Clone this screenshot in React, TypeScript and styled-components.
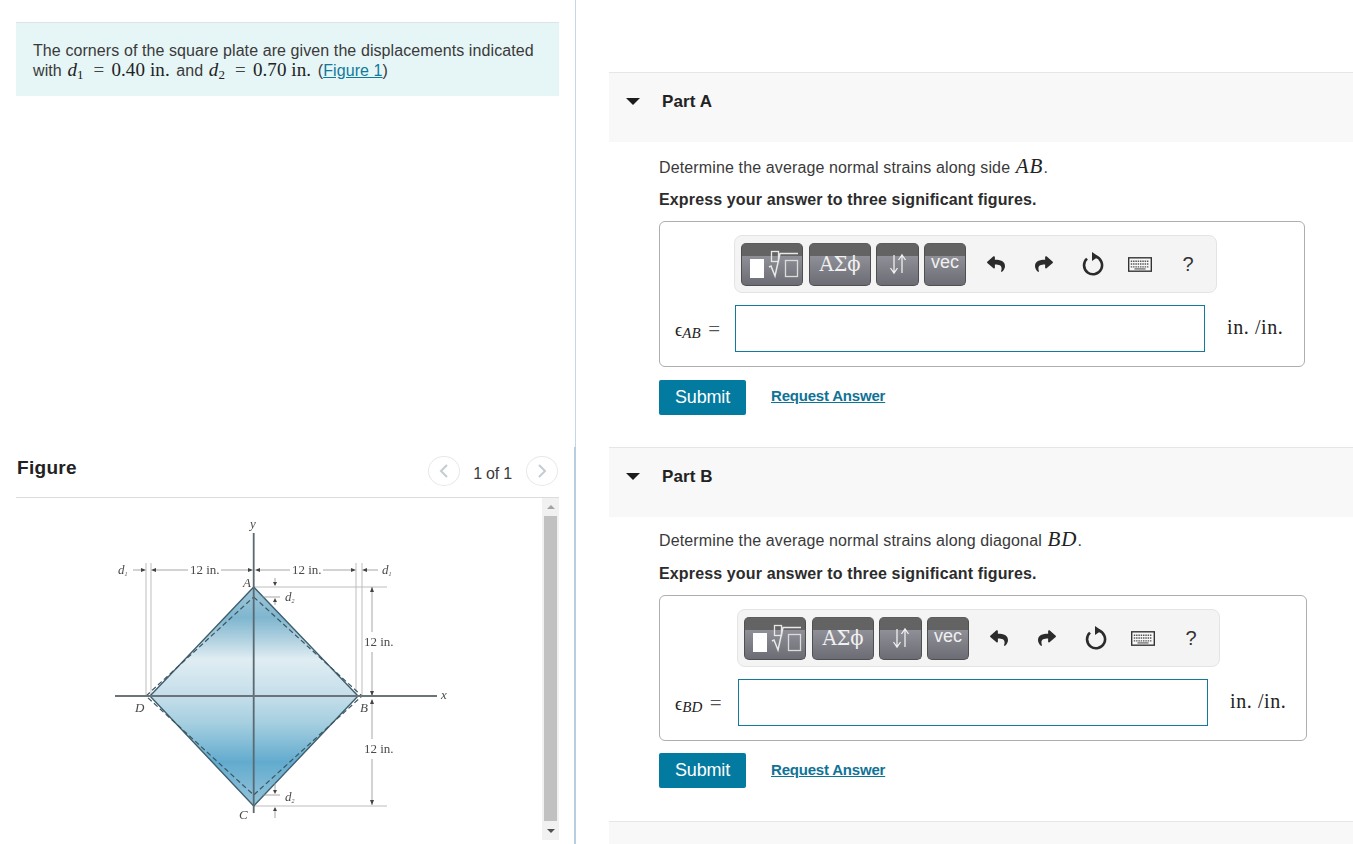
import React from "react";
import styled, { createGlobalStyle } from "styled-components";
import { FaReply, FaShare } from "react-icons/fa";

const Global = createGlobalStyle`
  html, body { margin: 0; padding: 0; background: #fff; height: 844px; overflow: hidden; }
  body { font-family: "Liberation Sans", Arial, sans-serif; color: #333; font-size: 16px; }
  * { box-sizing: border-box; }
`;

const Page = styled.div`
  display: flex;
  width: 1353px;
  height: 844px;
  overflow: hidden;
`;
const LeftColumn = styled.div`
  width: 576px;
  flex: none;
  display: flex;
  flex-direction: column;
`;
const LeftTop = styled.div`
  height: 447px;
  padding: 22px 16px 0 16px;
  border-right: 1px solid #c5d6e8;
`;
const LeftBottom = styled.div`
  height: 397px;
  padding: 9px 15px 0 16px;
  border-right: 2px solid #b9cde0;
`;
const Problem = styled.div`
  height: 74px;
  background: #e6f5f6;
  border-top: 1px solid #dfe3e5;
  padding: 18px 17px 0;
  font-size: 16px;
  line-height: 20px;
  letter-spacing: 0.09px;
  color: #3a3a3a;
`;
const Math = styled.span`
  font-family: "Liberation Serif", "Times New Roman", serif;
  font-size: 19px;
  line-height: 0;
  letter-spacing: 0.1px;
  margin: 0 2px 0 1px;
  color: #222;
`;
const Var = styled.i`
  font-family: "Liberation Serif", "Times New Roman", serif;
`;
const Sub = styled.sub`
  font-size: 13px;
  line-height: 0;
  vertical-align: -3px;
`;
const Eq = styled.span`
  margin: 0 7px 0 10px;
  color: #444;
`;
const FigLink = styled.a`
  color: #0f7b9c;
  text-decoration: underline;
`;
const FigureHeader = styled.div`
  height: 42px;
  display: flex;
  align-items: flex-start;
  justify-content: space-between;
  border-bottom: 1px solid #dcdcdc;
`;
const FigureTitle = styled.div`
  font-size: 19px;
  font-weight: 700;
  letter-spacing: 0.3px;
  line-height: 24px;
  margin: 0 0 0 1px;
  color: #222;
`;
const Pager = styled.div`
  display: flex;
  align-items: center;
  height: 30px;
  margin-right: 1px;
`;
const PageButton = styled.div`
  width: 32px;
  height: 30px;
  border: 1px solid #e8e8e8;
  border-radius: 50%;
  display: flex;
  align-items: center;
  justify-content: center;
`;
const PageLabel = styled.span`
  margin: 5px 14px 0 13px;
  font-size: 16px;
  letter-spacing: -0.2px;
  color: #3a3a3a;
`;
const ScrollArea = styled.div`
  display: flex;
  height: 342px;
`;
const FigureBox = styled.div`
  flex: 1;
  overflow: hidden;
  svg { display: block; filter: blur(0.35px); }
`;
const Scrollbar = styled.div`
  width: 17px;
  flex: none;
  background: #f1f1f1;
  display: flex;
  flex-direction: column;
  align-items: center;
`;
const ScrollEnd = styled.div`
  height: 18px;
  width: 100%;
  display: flex;
  align-items: center;
  justify-content: center;
`;
const Tri = styled.div<{ $down?: boolean }>`
  width: 0;
  height: 0;
  border-left: 4px solid transparent;
  border-right: 4px solid transparent;
  ${(p) => (p.$down ? "border-top: 4px solid #505050;" : "border-bottom: 4px solid #a3a3a3;")}
`;
const Thumb = styled.div`
  width: 13px;
  height: 305px;
  background: #c1c1c1;
  margin-bottom: 1px;
`;

const RightColumn = styled.div`
  flex: 1;
  padding: 72px 0 0 33px;
  min-width: 0;
`;
const Section = styled.section<{ $height?: number }>`
  height: ${(p) => (p.$height ? `${p.$height}px` : "auto")};
`;
const PartHeader = styled.div`
  height: 70px;
  background: #f8f8f8;
  border-top: 1px solid #e6e6e6;
  display: flex;
  align-items: center;
  padding: 0 0 12px 17px;
`;
const Caret = styled.div`
  width: 0;
  height: 0;
  border-left: 7px solid transparent;
  border-right: 7px solid transparent;
  border-top: 7px solid #1c1c1c;
  margin-right: 22px;
`;
const PartTitle = styled.h2`
  margin: 0;
  font-size: 17px;
  font-weight: 700;
  letter-spacing: 0.1px;
  color: #222;
  line-height: 20px;
`;
const PartBody = styled.div<{ $compact?: boolean }>`
  padding: ${(p) => (p.$compact ? "13px" : "15px")} 0 0 50px;
`;
const Prompt = styled.p`
  margin: 0;
  font-size: 16px;
  line-height: 22px;
  letter-spacing: 0.13px;
  color: #3a3a3a;
`;
const PromptMath = styled.i`
  font-family: "Liberation Serif", "Times New Roman", serif;
  font-size: 21px;
  letter-spacing: 1px;
  line-height: 0;
  margin-left: 1px;
  color: #222;
`;
const Instruction = styled.p<{ $compact?: boolean }>`
  margin: ${(p) => (p.$compact ? "12px" : "11px")} 0 11px;
  font-size: 16px;
  font-weight: 700;
  letter-spacing: 0.14px;
  line-height: 20px;
  color: #2c2c2c;
`;
const AnswerBox = styled.div<{ $width: number }>`
  width: ${(p) => p.$width}px;
  height: 146px;
  border: 1px solid #aeaeae;
  border-radius: 6px;
  padding-top: 13px;
`;
const Toolbar = styled.div<{ $indent: number }>`
  margin-left: ${(p) => p.$indent}px;
  width: 483px;
  height: 58px;
  background: #f4f4f4;
  border: 1px solid #e4e4e4;
  border-radius: 8px;
  display: flex;
  align-items: center;
  padding: 0 0 0 6px;
`;
const TemplateButton = styled.div<{ $width: number; $gap?: number }>`
  width: ${(p) => p.$width}px;
  height: 43px;
  margin-right: ${(p) => p.$gap ?? 5}px;
  flex: none;
  border-radius: 5px;
  border: 1px solid #4f4f4f;
  border-top-color: #5c5c5c;
  background: linear-gradient(#636363 0 12px, #8f8f97 12px, #6c6c74 100%);
  color: #f0f0f0;
  display: flex;
  align-items: center;
  justify-content: center;
`;
const GreekLabel = styled.span`
  font-family: "DejaVu Serif", "Liberation Serif", serif;
  font-size: 19.5px;
`;
const VecLabel = styled.span`
  font-size: 18px;
  margin-top: -3px;
`;
const ToolIcons = styled.div`
  flex: 1;
  display: flex;
  align-items: center;
  justify-content: space-between;
  padding: 0 13px 0 15px;
  color: #2b2b2b;
  height: 100%;
`;
const ToolIcon = styled.div`
  width: 30px;
  display: flex;
  align-items: center;
  justify-content: center;
`;
const HelpMark = styled.span`
  font-size: 20px;
  color: #333;
`;
const AnswerRow = styled.div<{ $labelWidth: number }>`
  display: grid;
  grid-template-columns: ${(p) => p.$labelWidth}px 470px auto;
  align-items: center;
  margin-top: 12px;
  height: 47px;
`;
const SymbolLabel = styled.div`
  padding-left: 15px;
  font-family: "Liberation Serif", serif;
  font-size: 18px;
  white-space: nowrap;
  color: #222;
  margin-top: 3px;
`;
const AnswerSub = styled.i`
  font-size: 15px;
  vertical-align: -2px;
  line-height: 0;
`;
const AnswerEq = styled.span`
  margin-left: 3px;
  font-size: 21px;
  line-height: 0;
  color: #555;
`;
const AnswerInput = styled.div`
  height: 47px;
  border: 1px solid #137a9c;
  background: #fff;
`;
const Unit = styled.div`
  margin-left: 22px;
  font-family: "Liberation Serif", serif;
  font-size: 20px;
  letter-spacing: 0.6px;
  color: #222;
  margin-top: -2px;
`;
const Actions = styled.div<{ $compact?: boolean }>`
  display: flex;
  align-items: center;
  margin-top: ${(p) => (p.$compact ? "12px" : "13px")};
`;
const SubmitButton = styled.div`
  width: 87px;
  height: 35px;
  background: #037a9f;
  border-radius: 2px;
  color: #fff;
  font-size: 18px;
  letter-spacing: -0.15px;
  display: flex;
  align-items: center;
  justify-content: center;
`;
const RequestLink = styled.a<{ $compact?: boolean }>`
  margin: 0 0 ${(p) => (p.$compact ? "2px" : "4px")} 25px;
  font-size: 15px;
  font-weight: 700;
  letter-spacing: -0.2px;
  color: #0f7396;
  text-decoration: underline;
`;

const Chevron = ({ left }: { left?: boolean }) => (
  <svg width="12" height="16" viewBox="0 0 12 16">
    <path d={left ? "M9 2 L3 8 L9 14" : "M3 2 L9 8 L3 14"} fill="none" stroke="#c4ccd2" strokeWidth="2" />
  </svg>
);

const RootIcon = () => (
  <svg width="60" height="41" viewBox="0 0 60 41">
    <rect x="8" y="15" width="14" height="19" fill="#fff" />
    <rect x="29.5" y="7.5" width="7" height="10" fill="none" stroke="#e8e8e8" strokeWidth="1.3" />
    <path d="M27 23 L29 22 L33 32 L38 9.5 H56" fill="none" stroke="#e8e8e8" strokeWidth="1.5" />
    <rect x="43.5" y="16.5" width="12" height="16" fill="none" stroke="#dcdcdc" strokeWidth="1.3" />
  </svg>
);
const ArrowsIcon = () => (
  <svg width="22" height="24" viewBox="0 0 22 24">
    <path d="M7 3 V20 M3.5 16 L7 21 L10.5 16 M15 21 V4 M11.5 8 L15 3 L18.5 8" fill="none" stroke="#f0f0f0" strokeWidth="1.3" />
  </svg>
);
const ResetIcon = () => (
  <svg width="24" height="26" viewBox="-1 0 24 26">
    <path d="M14.5 5.6 A9 9 0 1 1 6 7.6" fill="none" stroke="#2b2b2b" strokeWidth="2.6" />
    <path d="M11 1 L17.5 5.5 L11 10 Z" fill="#2b2b2b" />
  </svg>
);
const KeyboardIcon = () => (
  <svg width="24" height="15" viewBox="0 0 26 16">
    <rect x="0.75" y="0.75" width="24.5" height="14.5" fill="#f7f7f7" stroke="#333" strokeWidth="1.5" />
    <path d="M3 4.5 H23 M3 7.5 H23" stroke="#555" strokeWidth="1.6" strokeDasharray="1.6 0.9" />
    <path d="M3 10.5 H23" stroke="#555" strokeWidth="1.4" strokeDasharray="1.6 0.9" />
    <path d="M7 12.8 H19" stroke="#555" strokeWidth="1.2" />
  </svg>
);

const PlateFigure = () => {
  const label = { fontFamily: "'Liberation Serif', serif", fontSize: 13, fill: "#4a4a4a" };
  const ital = { ...label, fontStyle: "italic" as const };
  const thin = { stroke: "#bdbdbd", strokeWidth: 1, fill: "none" };
  const dim = { stroke: "#8f8f8f", strokeWidth: 0.8, fill: "none" };
  const tip = "#444";
  return (
    <svg width="525" height="342" viewBox="16 498 525 342">
      <defs>
        <linearGradient id="plate" x1="0" y1="587" x2="0" y2="806" gradientUnits="userSpaceOnUse">
          <stop offset="0" stopColor="#a2c9da" />
          <stop offset="0.14" stopColor="#7fb6cf" />
          <stop offset="0.25" stopColor="#b5d4e2" />
          <stop offset="0.33" stopColor="#e0edf3" />
          <stop offset="0.5" stopColor="#c4deea" />
          <stop offset="0.62" stopColor="#a6cfe0" />
          <stop offset="0.8" stopColor="#62abce" />
          <stop offset="1" stopColor="#96c5da" />
        </linearGradient>
      </defs>
      <path d="M146 563 V696 M151 563 V696 M356 563 V696 M362 563 V696" {...thin} />
      <path d="M254 587 H387 M254 806 H387" {...thin} />
      <path d="M253.7 587 L358 696 L253.7 806 L150 696 Z" fill="url(#plate)" stroke="#3f5f6e" strokeWidth="1.4" />
      <path d="M253.7 597 L362 696 L253.7 795 L146 696 Z" fill="none" stroke="#3c5561" strokeWidth="1.2" strokeDasharray="5 3" />
      <path d="M253.7 533 V813" stroke="#596a72" strokeWidth="1.8" />
      <path d="M115 696 H437" stroke="#6b7479" strokeWidth="1.8" />
      <path d="M133 570 H143 M154 570 H188 M221 570 H250 M258 570 H290 M323 570 H354 M364 570 H378" {...dim} />
      <path d="M372 587 V632 M372 652 V696 M372 700 V739 M372 759 V805" {...dim} />
      <path d="M262 597 H280 M262 795 H280" {...dim} />
      <path d="M275 578 V585 M275 600 V605 M275 783 V792 M275 808 V818" {...dim} />
      <path d="M146 570 l-5 -2 v4 Z M151 570 l5 -2 v4 Z M253 570 l-5 -2 v4 Z M255 570 l5 -2 v4 Z M356 570 l-5 -2 v4 Z M362 570 l5 -2 v4 Z" fill={tip} />
      <path d="M372 587 l-2 5 h4 Z M372 696 l-2 -5 h4 Z M372 699 l-2 5 h4 Z M372 805 l-2 -5 h4 Z M275 586 l-2 -4 h4 Z M275 598 l-2 4 h4 Z M275 794 l-2 -4 h4 Z M275 807 l-2 4 h4 Z" fill={tip} />
      <text x="250" y="528" {...ital}>y</text>
      <text x="441" y="699" {...ital}>x</text>
      <text x="243" y="587" {...ital}>A</text>
      <text x="360" y="712" {...ital}>B</text>
      <text x="239" y="819" {...ital}>C</text>
      <text x="135" y="712" {...ital}>D</text>
      <text x="190" y="574" {...label}>12 in.</text>
      <text x="292" y="574" {...label}>12 in.</text>
      <text x="364" y="646" {...label}>12 in.</text>
      <text x="364" y="753" {...label}>12 in.</text>
      <text x="118" y="574" {...ital}>d<tspan fontSize="6" dy="2">1</tspan></text>
      <text x="382" y="574" {...ital}>d<tspan fontSize="6" dy="2">1</tspan></text>
      <text x="285" y="601" {...ital}>d<tspan fontSize="6" dy="2">2</tspan></text>
      <text x="285" y="801" {...ital}>d<tspan fontSize="6" dy="2">2</tspan></text>
    </svg>
  );
};

type PartProps = {
  name: string;
  prompt: string;
  symbol: string;
  height: number;
  boxWidth: number;
  labelWidth: number;
  compact?: boolean;
};

const Part = ({ name, prompt, symbol, height, boxWidth, labelWidth, compact }: PartProps) => (
  <Section $height={height}>
    <PartHeader>
      <Caret />
      <PartTitle>{name}</PartTitle>
    </PartHeader>
    <PartBody $compact={compact}>
      <Prompt>
        {prompt} <PromptMath>{symbol}</PromptMath>.
      </Prompt>
      <Instruction $compact={compact}>Express your answer to three significant figures.</Instruction>
      <AnswerBox $width={boxWidth}>
        <Toolbar $indent={labelWidth - 1}>
          <TemplateButton $width={62} $gap={6}><RootIcon /></TemplateButton>
          <TemplateButton $width={62}><GreekLabel>ΑΣϕ</GreekLabel></TemplateButton>
          <TemplateButton $width={43}><ArrowsIcon /></TemplateButton>
          <TemplateButton $width={42} $gap={0}><VecLabel>vec</VecLabel></TemplateButton>
          <ToolIcons>
            <ToolIcon><FaReply size={18} /></ToolIcon>
            <ToolIcon><FaShare size={18} /></ToolIcon>
            <ToolIcon><ResetIcon /></ToolIcon>
            <ToolIcon><KeyboardIcon /></ToolIcon>
            <ToolIcon><HelpMark>?</HelpMark></ToolIcon>
          </ToolIcons>
        </Toolbar>
        <AnswerRow $labelWidth={labelWidth}>
          <SymbolLabel>
            ϵ<AnswerSub>{symbol}</AnswerSub> <AnswerEq>=</AnswerEq>
          </SymbolLabel>
          <AnswerInput />
          <Unit>in. /in.</Unit>
        </AnswerRow>
      </AnswerBox>
      <Actions $compact={compact}>
        <SubmitButton>Submit</SubmitButton>
        <RequestLink $compact={compact}>Request Answer</RequestLink>
      </Actions>
    </PartBody>
  </Section>
);

export default function App() {
  return (
    <Page>
      <Global />
      <LeftColumn>
        <LeftTop>
          <Problem>
            The corners of the square plate are given the displacements indicated
            <br />
            with{" "}
            <Math><Var>d</Var><Sub>1</Sub><Eq>=</Eq>0.40 in.</Math> and{" "}
            <Math><Var>d</Var><Sub>2</Sub><Eq>=</Eq>0.70 in.</Math> (<FigLink>Figure 1</FigLink>)
          </Problem>
        </LeftTop>
        <LeftBottom>
          <FigureHeader>
            <FigureTitle>Figure</FigureTitle>
            <Pager>
              <PageButton><Chevron left /></PageButton>
              <PageLabel>1 of 1</PageLabel>
              <PageButton><Chevron /></PageButton>
            </Pager>
          </FigureHeader>
          <ScrollArea>
            <FigureBox><PlateFigure /></FigureBox>
            <Scrollbar>
              <ScrollEnd><Tri /></ScrollEnd>
              <Thumb />
              <ScrollEnd><Tri $down /></ScrollEnd>
            </Scrollbar>
          </ScrollArea>
        </LeftBottom>
      </LeftColumn>
      <RightColumn>
        <Part
          name="Part A"
          prompt="Determine the average normal strains along side"
          symbol="AB"
          height={375}
          boxWidth={646}
          labelWidth={75}
        />
        <Part
          name="Part B"
          prompt="Determine the average normal strains along diagonal"
          symbol="BD"
          height={374}
          boxWidth={648}
          labelWidth={78}
          compact
        />
        <Section>
          <PartHeader>
            <Caret />
            <PartTitle>Part C</PartTitle>
          </PartHeader>
        </Section>
      </RightColumn>
    </Page>
  );
}
